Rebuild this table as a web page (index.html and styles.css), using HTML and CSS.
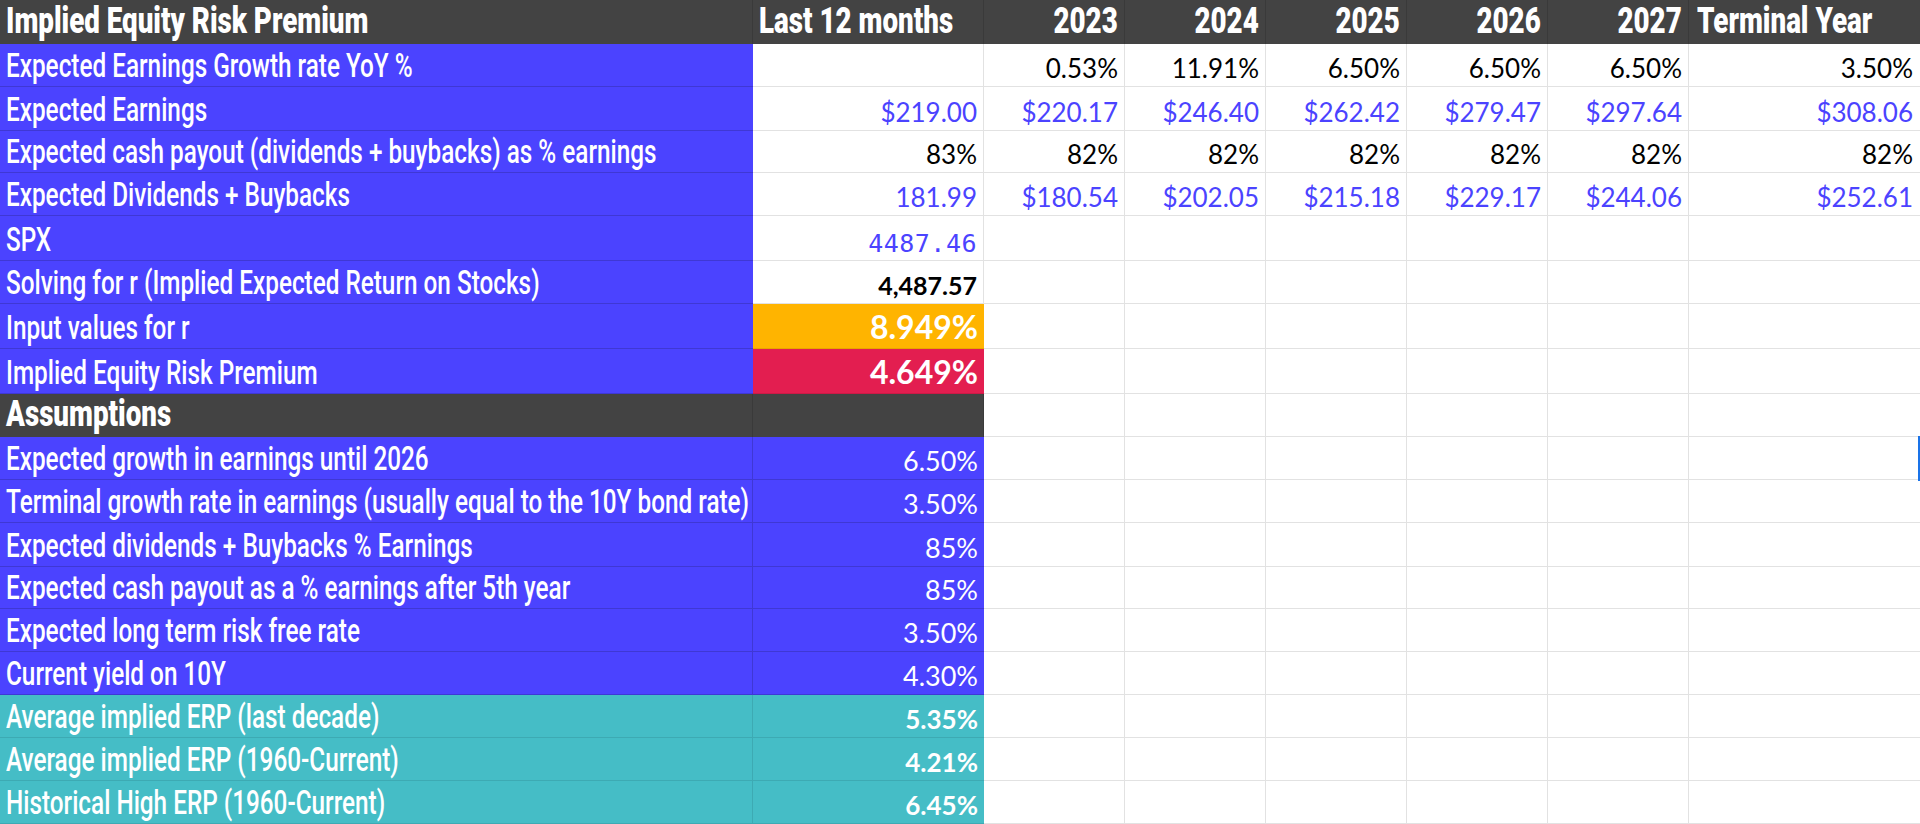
FILE: index.html
```html
<!DOCTYPE html>
<html lang="en">
<head>
<meta charset="utf-8">
<title>Implied Equity Risk Premium</title>
<link rel="stylesheet" href="styles.css">
</head>
<body>
<div class="sheet">
  <!-- header -->
  <div class="c h"><span class="t th">Implied Equity Risk Premium</span></div>
  <div class="c h"><span class="t th">Last 12 months</span></div>
  <div class="c h r"><span class="t th tr">2023</span></div>
  <div class="c h r"><span class="t th tr">2024</span></div>
  <div class="c h r"><span class="t th tr">2025</span></div>
  <div class="c h r"><span class="t th tr">2026</span></div>
  <div class="c h r"><span class="t th tr">2027</span></div>
  <div class="c h last hterm"><span class="t th">Terminal Year</span></div>

  <!-- row 1 -->
  <div class="c lbl"><span class="t tl">Expected Earnings Growth rate YoY %</span></div>
  <div class="c w"></div>
  <div class="c w n">0.53%</div>
  <div class="c w n">11.91%</div>
  <div class="c w n">6.50%</div>
  <div class="c w n">6.50%</div>
  <div class="c w n">6.50%</div>
  <div class="c w n last">3.50%</div>

  <!-- row 2 -->
  <div class="c lbl"><span class="t tl">Expected Earnings</span></div>
  <div class="c w n blue">$219.00</div>
  <div class="c w n blue">$220.17</div>
  <div class="c w n blue">$246.40</div>
  <div class="c w n blue">$262.42</div>
  <div class="c w n blue">$279.47</div>
  <div class="c w n blue">$297.64</div>
  <div class="c w n blue last">$308.06</div>

  <!-- row 3 -->
  <div class="c lbl"><span class="t tl">Expected cash payout (dividends + buybacks) as % earnings</span></div>
  <div class="c w n">83%</div>
  <div class="c w n">82%</div>
  <div class="c w n">82%</div>
  <div class="c w n">82%</div>
  <div class="c w n">82%</div>
  <div class="c w n">82%</div>
  <div class="c w n last">82%</div>

  <!-- row 4 -->
  <div class="c lbl"><span class="t tl">Expected Dividends + Buybacks</span></div>
  <div class="c w n blue">181.99</div>
  <div class="c w n blue">$180.54</div>
  <div class="c w n blue">$202.05</div>
  <div class="c w n blue">$215.18</div>
  <div class="c w n blue">$229.17</div>
  <div class="c w n blue">$244.06</div>
  <div class="c w n blue last">$252.61</div>

  <!-- row 5 -->
  <div class="c lbl"><span class="t tl">SPX</span></div>
  <div class="c w n mono">4487.46</div>
  <div class="c w"></div><div class="c w"></div><div class="c w"></div><div class="c w"></div><div class="c w"></div><div class="c w last"></div>

  <!-- row 6 -->
  <div class="c lbl"><span class="t tl">Solving for r (Implied Expected Return on Stocks)</span></div>
  <div class="c w n solve">4,487.57</div>
  <div class="c w"></div><div class="c w"></div><div class="c w"></div><div class="c w"></div><div class="c w"></div><div class="c w last"></div>

  <!-- row 7 -->
  <div class="c lbl"><span class="t tl">Input values for r</span></div>
  <div class="c n big orange">8.949%</div>
  <div class="c w"></div><div class="c w"></div><div class="c w"></div><div class="c w"></div><div class="c w"></div><div class="c w last"></div>

  <!-- row 8 -->
  <div class="c lbl"><span class="t tl">Implied Equity Risk Premium</span></div>
  <div class="c n big red">4.649%</div>
  <div class="c w"></div><div class="c w"></div><div class="c w"></div><div class="c w"></div><div class="c w"></div><div class="c w last"></div>

  <!-- row 9 assumptions -->
  <div class="c h hsec"><span class="t th">Assumptions</span></div>
  <div class="c h"></div>
  <div class="c w"></div><div class="c w"></div><div class="c w"></div><div class="c w"></div><div class="c w"></div><div class="c w last"></div>

  <!-- assumptions (blue) -->
  <div class="c lbl sep"><span class="t tl">Expected growth in earnings until 2026</span></div>
  <div class="c n bv">6.50%</div>
  <div class="c w"></div><div class="c w"></div><div class="c w"></div><div class="c w"></div><div class="c w"></div><div class="c w last"></div>

  <div class="c lbl sep"><span class="t tl">Terminal growth rate in earnings (usually equal to the 10Y bond rate)</span></div>
  <div class="c n bv">3.50%</div>
  <div class="c w"></div><div class="c w"></div><div class="c w"></div><div class="c w"></div><div class="c w"></div><div class="c w last"></div>

  <div class="c lbl sep"><span class="t tl">Expected dividends + Buybacks % Earnings</span></div>
  <div class="c n bv">85%</div>
  <div class="c w"></div><div class="c w"></div><div class="c w"></div><div class="c w"></div><div class="c w"></div><div class="c w last"></div>

  <div class="c lbl sep"><span class="t tl">Expected cash payout as a % earnings after 5th year</span></div>
  <div class="c n bv">85%</div>
  <div class="c w"></div><div class="c w"></div><div class="c w"></div><div class="c w"></div><div class="c w"></div><div class="c w last"></div>

  <div class="c lbl sep"><span class="t tl">Expected long term risk free rate</span></div>
  <div class="c n bv">3.50%</div>
  <div class="c w"></div><div class="c w"></div><div class="c w"></div><div class="c w"></div><div class="c w"></div><div class="c w last"></div>

  <div class="c lbl sep"><span class="t tl">Current yield on 10Y</span></div>
  <div class="c n bv">4.30%</div>
  <div class="c w"></div><div class="c w"></div><div class="c w"></div><div class="c w"></div><div class="c w"></div><div class="c w last"></div>

  <!-- teal -->
  <div class="c teal tsep"><span class="t tl">Average implied ERP (last decade)</span></div>
  <div class="c n tv">5.35%</div>
  <div class="c w"></div><div class="c w"></div><div class="c w"></div><div class="c w"></div><div class="c w"></div><div class="c w last"></div>

  <div class="c teal tsep"><span class="t tl">Average implied ERP (1960-Current)</span></div>
  <div class="c n tv">4.21%</div>
  <div class="c w"></div><div class="c w"></div><div class="c w"></div><div class="c w"></div><div class="c w"></div><div class="c w last"></div>

  <div class="c teal tsep"><span class="t tl">Historical High ERP (1960-Current)</span></div>
  <div class="c n tv">6.45%</div>
  <div class="c w"></div><div class="c w"></div><div class="c w"></div><div class="c w"></div><div class="c w"></div><div class="c w last"></div>

  <div class="cursor"></div>
</div>
</body>
</html>
```

FILE: styles.css
```css
* { box-sizing: border-box; }

html, body {
  margin: 0;
  padding: 0;
  background: #ffffff;
  overflow: hidden;
}

.sheet {
  position: relative;
  width: 1920px;
  height: 824px;
  display: grid;
  grid-template-columns: 753px 231px 141px 141px 141px 141px 141px 1fr;
  grid-template-rows: 44px 43px 44px 42px 43px 45px 43px 45px 45px 43px 43px 43px 44px 42px 43px 43px 43px 43px 43px;
  font-family: Lato, "Noto Sans", sans-serif;
}

.c {
  display: flex;
  align-items: flex-end;
  overflow: hidden;
  white-space: nowrap;
  min-width: 0;
}

/* text with a condensed look */
.t {
  display: inline-block;
  line-height: 1;
  white-space: nowrap;
  transform-origin: left bottom;
}

.th {
  font-family: Roboto, "Liberation Sans", sans-serif;
  font-weight: 900;
  font-size: 37px;
  transform: scaleX(0.75);
}

.tr { transform-origin: right bottom; }

.tl {
  font-family: Roboto, "Liberation Sans", sans-serif;
  font-weight: 500;
  font-size: 34px;
  transform: scaleX(0.715);
}

/* header cells */
.h {
  background: #434343;
  color: #ffffff;
  padding: 0 6px 5px 6px;
  border-right: 1px solid #3a3a3a;
  overflow: visible;
}
.h.r { justify-content: flex-end; }
.hterm { padding-left: 8px; }

/* label column */
.lbl {
  background: #4b43ff;
  color: #ffffff;
  padding: 0 6px 4px 6px;
  border-bottom: 1px solid #3f38d4;
}
.lbl.sep { border-right: 1px solid #3f38d4; }

.teal {
  background: #45bdc6;
  color: #ffffff;
  padding: 0 6px 4px 6px;
  border-bottom: 1px solid #3daab3;
  border-right: 1px solid #3daab3;
}

/* white grid cells */
.w {
  background: #ffffff;
  border-right: 1px solid #e2e2e2;
  border-bottom: 1px solid #e2e2e2;
}
.last { border-right: none; }

/* numeric cells */
.n {
  justify-content: flex-end;
  padding: 0 6px 5px 6px;
  font-size: 26px;
  line-height: 1;
  color: #000000;
}
.n.last { padding-right: 7px; }

.blue { color: #4b43ff; }

.mono {
  font-family: "DejaVu Sans Mono", monospace;
  font-size: 25px;
  letter-spacing: 0.5px;
  color: #4b43ff;
  padding-bottom: 4px;
}

.solve {
  font-weight: 700;
  font-size: 25px;
}

.big {
  font-weight: 700;
  font-size: 32px;
  color: #ffffff;
  padding-bottom: 5px;
}
.orange {
  background: #ffb400;
  border-bottom: 1px solid #e8a400;
}
.red {
  background: #e31e50;
  border-bottom: 1px solid #cc1a47;
}

.bv {
  background: #4b43ff;
  color: #ffffff;
  font-size: 27px;
  border-bottom: 1px solid #3f38d4;
}

.tv {
  background: #45bdc6;
  color: #ffffff;
  font-weight: 700;
  border-bottom: 1px solid #3daab3;
}

/* selection cursor at the right edge */
.cursor {
  position: absolute;
  right: 0;
  top: 436px;
  width: 2px;
  height: 45px;
  background: #1a73e8;
}
```
